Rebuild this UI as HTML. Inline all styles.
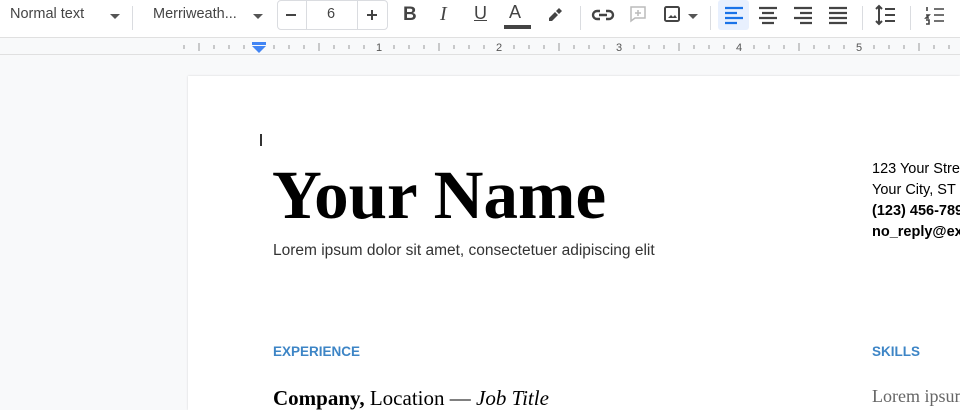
<!DOCTYPE html>
<html><head><style>
*{margin:0;padding:0;box-sizing:border-box}
html,body{width:960px;height:410px;overflow:hidden}
body{background:#f8f9fa;font-family:"Liberation Sans",sans-serif}
#w{position:relative;width:960px;height:410px;overflow:hidden}
.tb{position:absolute;left:0;top:0;width:960px;height:38px;background:#fff;border-bottom:1px solid #e0e0e0}
.a{position:absolute}
.t{color:#444;font-size:14.5px}
.sep{position:absolute;top:6px;width:1px;height:24px;background:#dadce0}
.caret{position:absolute;width:0;height:0;border-left:5px solid transparent;border-right:5px solid transparent;border-top:5px solid #555}
.ruler{position:absolute;left:0;top:39px;width:960px;height:16px;background:#f8f9fa;border-bottom:1px solid #e0e0e0}
.page{position:absolute;left:188px;top:76px;width:772px;height:334px;background:#fff;box-shadow:0 0 2px rgba(0,0,0,.15)}
.sans{font-family:"Liberation Sans",sans-serif}
.serif{font-family:"Liberation Serif",serif}
</style></head><body><div id="w">
<div class="tb">
<div class="a t" style="left:10px;top:6px">Normal text</div>
<div class="caret" style="left:110px;top:14px"></div>
<div class="sep" style="left:132px"></div>
<div class="a t" style="left:153px;top:6px">Merriweath...</div>
<div class="caret" style="left:253px;top:14px"></div>
<div class="a" style="left:277px;top:0;width:111px;height:30px;border:1px solid #dadce0;border-radius:4px"></div>
<div class="a" style="left:306px;top:0;width:1px;height:30px;background:#dadce0"></div>
<div class="a" style="left:357px;top:0;width:1px;height:30px;background:#dadce0"></div>
<div class="a" style="left:286px;top:14px;width:10px;height:2px;background:#444"></div>
<div class="a t" style="left:327px;top:6px">6</div>
<div class="a" style="left:367px;top:14px;width:10px;height:2px;background:#444"></div>
<div class="a" style="left:371px;top:10px;width:2px;height:10px;background:#444"></div>
<div class="a" style="left:403px;top:4px;font-size:19px;font-weight:bold;color:#444">B</div>
<div class="a serif" style="left:440px;top:3px;font-size:20px;font-style:italic;color:#444">I</div>
<div class="a" style="left:474px;top:3px;font-size:18px;color:#444;text-decoration:underline">U</div>
<div class="a" style="left:509px;top:2px;font-size:18px;color:#444">A</div>
<div class="a" style="left:504px;top:25px;width:27px;height:4px;background:#444"></div>
<svg class="a" style="left:545px;top:4px" width="20" height="20" viewBox="0 0 20 20"><path d="M4 14l6-6 3 3-6 6H4z M11 7l3-3 3 3-3 3z" fill="#444"/></svg>
<div class="sep" style="left:580px"></div>
<svg class="a" style="left:591px;top:6px" width="24" height="18" viewBox="0 0 24 18"><path d="M9 5H6a4 4 0 0 0 0 8h3M15 5h3a4 4 0 0 1 0 8h-3M8 9h8" stroke="#444" stroke-width="2.4" fill="none"/></svg>
<svg class="a" style="left:628px;top:4px" width="20" height="20" viewBox="0 0 20 20"><path d="M3 3h14v11H7l-4 3z M10 6v6M7 9h6" stroke="#bbb" stroke-width="1.5" fill="none"/></svg>
<svg class="a" style="left:662px;top:4px" width="20" height="20" viewBox="0 0 20 20"><rect x="3" y="3" width="14" height="14" rx="1.5" stroke="#444" stroke-width="2" fill="none"/><path d="M6 14l3-3 2 2 2-2 2 3z" fill="#444"/></svg>
<div class="caret" style="left:688px;top:14px"></div>
<div class="sep" style="left:710px"></div>
<div class="a" style="left:718px;top:0;width:31px;height:30px;background:#e8f0fe;border-radius:3px"></div>
<svg class="a" style="left:722px;top:5px" width="130" height="20" viewBox="0 0 130 20">
<path d="M3 3h18M3 8h12M3 13h18M3 18h12" stroke="#1a73e8" stroke-width="2.2"/>
<path d="M37 3h18M40 8h12M37 13h18M40 18h12" stroke="#444" stroke-width="2.2"/>
<path d="M72 3h18M78 8h12M72 13h18M78 18h12" stroke="#444" stroke-width="2.2"/>
<path d="M107 3h18M107 8h18M107 13h18M107 18h18" stroke="#444" stroke-width="2.2"/>
</svg>
<div class="sep" style="left:862px"></div>
<svg class="a" style="left:874px;top:4px" width="24" height="22" viewBox="0 0 24 22"><path d="M5 2v18M2 5l3-3 3 3M2 17l3 3 3-3M11 5h10M11 11h10M11 17h10" stroke="#444" stroke-width="2" fill="none"/></svg>
<div class="sep" style="left:910px"></div>
<svg class="a" style="left:924px;top:4px" width="24" height="22" viewBox="0 0 24 22"><path d="M3 3v4M2 11h3l-3 3h3M2 16h3v4H2M10 5h10M10 11h10M10 17h10" stroke="#444" stroke-width="1.6" fill="none"/></svg>
</div>
<div class="ruler">
<svg width="960" height="16">
<g stroke="#999" stroke-width="1">
<line x1="184" y1="6" x2="184" y2="10"/><line x1="199" y1="4" x2="199" y2="12"/><line x1="214" y1="6" x2="214" y2="10"/><line x1="229" y1="6" x2="229" y2="10"/><line x1="244" y1="6" x2="244" y2="10"/>
<line x1="274" y1="6" x2="274" y2="10"/><line x1="289" y1="6" x2="289" y2="10"/><line x1="304" y1="6" x2="304" y2="10"/><line x1="319" y1="4" x2="319" y2="12"/><line x1="334" y1="6" x2="334" y2="10"/><line x1="349" y1="6" x2="349" y2="10"/><line x1="364" y1="6" x2="364" y2="10"/>
<line x1="394" y1="6" x2="394" y2="10"/><line x1="409" y1="6" x2="409" y2="10"/><line x1="424" y1="6" x2="424" y2="10"/><line x1="439" y1="4" x2="439" y2="12"/><line x1="454" y1="6" x2="454" y2="10"/><line x1="469" y1="6" x2="469" y2="10"/><line x1="484" y1="6" x2="484" y2="10"/>
<line x1="514" y1="6" x2="514" y2="10"/><line x1="529" y1="6" x2="529" y2="10"/><line x1="544" y1="6" x2="544" y2="10"/><line x1="559" y1="4" x2="559" y2="12"/><line x1="574" y1="6" x2="574" y2="10"/><line x1="589" y1="6" x2="589" y2="10"/><line x1="604" y1="6" x2="604" y2="10"/>
<line x1="634" y1="6" x2="634" y2="10"/><line x1="649" y1="6" x2="649" y2="10"/><line x1="664" y1="6" x2="664" y2="10"/><line x1="679" y1="4" x2="679" y2="12"/><line x1="694" y1="6" x2="694" y2="10"/><line x1="709" y1="6" x2="709" y2="10"/><line x1="724" y1="6" x2="724" y2="10"/>
<line x1="754" y1="6" x2="754" y2="10"/><line x1="769" y1="6" x2="769" y2="10"/><line x1="784" y1="6" x2="784" y2="10"/><line x1="799" y1="4" x2="799" y2="12"/><line x1="814" y1="6" x2="814" y2="10"/><line x1="829" y1="6" x2="829" y2="10"/><line x1="844" y1="6" x2="844" y2="10"/>
<line x1="874" y1="6" x2="874" y2="10"/><line x1="889" y1="6" x2="889" y2="10"/><line x1="904" y1="6" x2="904" y2="10"/><line x1="919" y1="4" x2="919" y2="12"/><line x1="934" y1="6" x2="934" y2="10"/><line x1="949" y1="6" x2="949" y2="10"/>
</g>
<g font-family="Liberation Sans" font-size="11" fill="#555" text-anchor="middle">
<text x="379" y="12">1</text><text x="499" y="12">2</text><text x="619" y="12">3</text><text x="739" y="12">4</text><text x="859" y="12">5</text>
</g>
<rect x="252" y="3" width="14" height="3" fill="#4285f4"/><path d="M252 7h14l-7 7z" fill="#4285f4"/>
</svg>
</div>
<div class="page"></div>
<div class="a" style="left:260px;top:134px;width:2px;height:12px;background:#333"></div>
<div class="a serif" style="left:272px;top:155px;font-size:69px;font-weight:bold;color:#000;white-space:nowrap;line-height:80px">Your Name</div>
<div class="a sans" style="left:273px;top:242px;font-size:15.5px;color:#333;white-space:nowrap">Lorem ipsum dolor sit amet, consectetuer adipiscing elit</div>
<div class="a sans" style="left:872px;top:159px;font-size:14.5px;line-height:21px;color:#000;white-space:nowrap">123 Your Street<br>Your City, ST 12345<br><b>(123) 456-7890</b><br><b>no_reply@example.com</b></div>
<div class="a sans" style="left:273px;top:344px;font-size:13.5px;font-weight:bold;color:#3d85c6">EXPERIENCE</div>
<div class="a sans" style="left:872px;top:344px;font-size:13.5px;font-weight:bold;color:#3d85c6">SKILLS</div>
<div class="a serif" style="left:273px;top:386px;font-size:21px;color:#000;white-space:nowrap"><b>Company,</b> Location — <i>Job Title</i></div>
<div class="a serif" style="left:872px;top:386px;font-size:18px;color:#666;white-space:nowrap">Lorem ipsum</div>
</div></body></html>
